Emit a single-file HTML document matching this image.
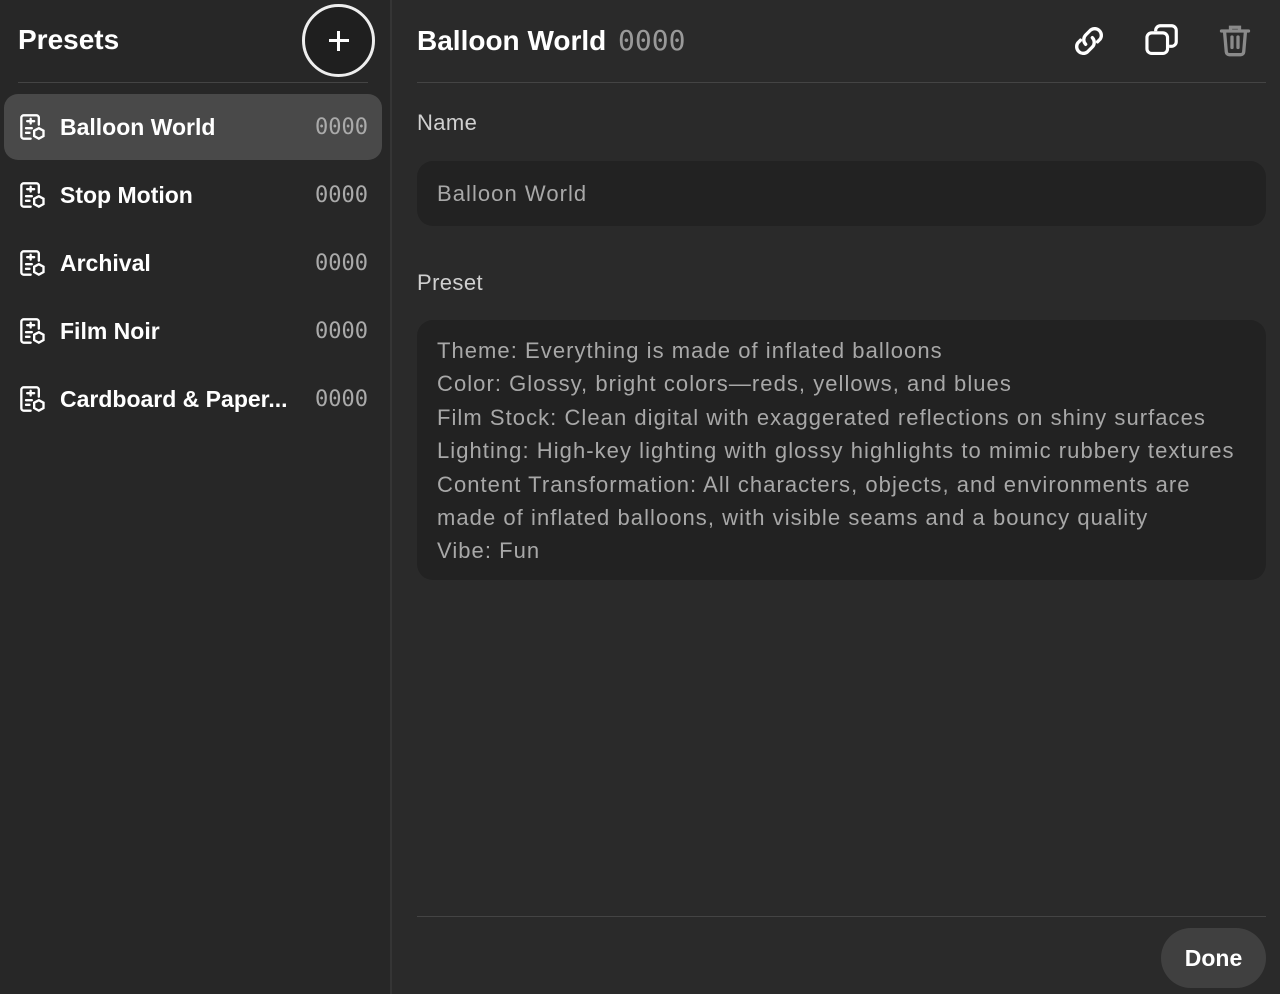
<!DOCTYPE html>
<html><head><style>
*{margin:0;padding:0;box-sizing:border-box}
body{width:1280px;height:994px;background:#2a2a2a;font-family:"Liberation Sans",sans-serif;color:#fff;position:relative;overflow:hidden}
.side{position:absolute;left:0;top:0;width:392px;height:994px;background:#272727;border-right:2px solid #353535}
.h{position:absolute;left:18px;top:24px;font-size:28px;font-weight:bold}
.plus{position:absolute;left:302px;top:4px;width:73px;height:73px;border-radius:50%;border:3px solid #eee;background:#1f1f1f}
.plus:before,.plus:after{content:"";position:absolute;background:#fff;left:50%;top:50%}
.plus:before{width:20px;height:3px;margin:-1.5px 0 0 -10px}
.plus:after{width:3px;height:20px;margin:-10px 0 0 -1.5px}
.sl{position:absolute;left:18px;top:82px;width:350px;height:1px;background:#444}
.item{position:absolute;left:4px;width:378px;height:66px;border-radius:14px;display:flex;align-items:center}
.item.sel{background:#494949}
.item svg{position:absolute;left:15px}
.item .t{position:absolute;left:56px;font-size:23px;font-weight:bold}
.item .n{position:absolute;right:14px;font-family:"DejaVu Sans Mono","Liberation Mono",monospace;font-size:22px;color:#aaa}
.title{position:absolute;left:417px;top:24px;font-size:28px;font-weight:bold}
.title span{font-family:"DejaVu Sans Mono",monospace;font-weight:normal;color:#999;font-size:28px;margin-left:4px}
.ml{position:absolute;left:417px;width:849px;height:1px;background:#444}
.lab{position:absolute;left:417px;font-size:22px;color:#d0d0d0;letter-spacing:0.4px}
.box{position:absolute;left:417px;width:849px;background:#222;border-radius:16px;color:#a8a8a8;font-size:22px;padding-left:20px;letter-spacing:1.05px;white-space:nowrap}
.done{position:absolute;left:1161px;top:928px;width:105px;height:60px;border-radius:30px;background:#404040;font-size:23px;font-weight:bold;display:flex;align-items:center;justify-content:center}
</style></head><body>
<div class="side">
<div class="h">Presets</div>
<div class="plus"></div>
<div class="sl"></div>
</div>
<svg width="0" height="0" style="position:absolute"><defs><g id="ic" fill="none" stroke="#fff" stroke-width="2" stroke-linecap="round"><path d="M10 22H4a2 2 0 0 1-2-2V4a2 2 0 0 1 2-2h11a2 2 0 0 1 2 2v6"/><path d="M7 7h6M10 5v4M6 13h5M6 17h3"/><path d="M17 13l4 2.2v4.6L17 22l-4-2.2v-4.6z"/></g></defs></svg>
<div class="item sel" style="top:94px"><svg width="28" height="28" viewBox="0 0 24 24"><use href="#ic"/></svg><div class="t">Balloon World</div><div class="n">0000</div></div>
<div class="item" style="top:162px"><svg width="28" height="28" viewBox="0 0 24 24"><use href="#ic"/></svg><div class="t">Stop Motion</div><div class="n">0000</div></div>
<div class="item" style="top:230px"><svg width="28" height="28" viewBox="0 0 24 24"><use href="#ic"/></svg><div class="t">Archival</div><div class="n">0000</div></div>
<div class="item" style="top:298px"><svg width="28" height="28" viewBox="0 0 24 24"><use href="#ic"/></svg><div class="t">Film Noir</div><div class="n">0000</div></div>
<div class="item" style="top:366px"><svg width="28" height="28" viewBox="0 0 24 24"><use href="#ic"/></svg><div class="t">Cardboard &amp; Paper...</div><div class="n">0000</div></div>

<div class="title">Balloon World <span>0000</span></div>
<svg style="position:absolute;left:1069px;top:21px" width="40" height="40" viewBox="0 0 24 24" fill="none" stroke="#fff" stroke-width="2" stroke-linecap="round"><path d="M10 14a4 4 0 0 1 0-5.6l3-3a4 4 0 0 1 5.6 5.6l-1.5 1.5"/><path d="M14 10a4 4 0 0 1 0 5.6l-3 3a4 4 0 0 1-5.6-5.6l1.5-1.5"/></svg>
<svg style="position:absolute;left:1143px;top:21px" width="38" height="38" viewBox="0 0 24 24" fill="none" stroke="#fff" stroke-width="2"><rect x="2.5" y="7.5" width="13" height="13" rx="3"/><path d="M8 6.5V6a3 3 0 0 1 3-3h7a3 3 0 0 1 3 3v7a3 3 0 0 1-3 3h-1.5"/></svg>
<svg style="position:absolute;left:1217px;top:22px" width="36" height="36" viewBox="0 0 24 24" fill="none" stroke="#8a8a8a" stroke-width="2.2" stroke-linecap="round"><path d="M3 6h18M9 6V3.5h6V6M5 6l1.2 14a2 2 0 0 0 2 1.8h7.6a2 2 0 0 0 2-1.8L19 6M10 10v7M14 10v7"/></svg>
<div class="ml" style="top:82px"></div>
<div class="lab" style="top:110px">Name</div>
<div class="box" style="top:161px;height:65px;line-height:65px">Balloon World</div>
<div class="lab" style="top:270px">Preset</div>
<div class="box" style="top:320px;height:260px;padding-top:14px;line-height:33.4px">Theme: Everything is made of inflated balloons<br>Color: Glossy, bright colors—reds, yellows, and blues<br>Film Stock: Clean digital with exaggerated reflections on shiny surfaces<br>Lighting: High-key lighting with glossy highlights to mimic rubbery textures<br>Content Transformation: All characters, objects, and environments are<br>made of inflated balloons, with visible seams and a bouncy quality<br>Vibe: Fun</div>
<div class="ml" style="top:916px"></div>
<div class="done">Done</div>
</body></html>
